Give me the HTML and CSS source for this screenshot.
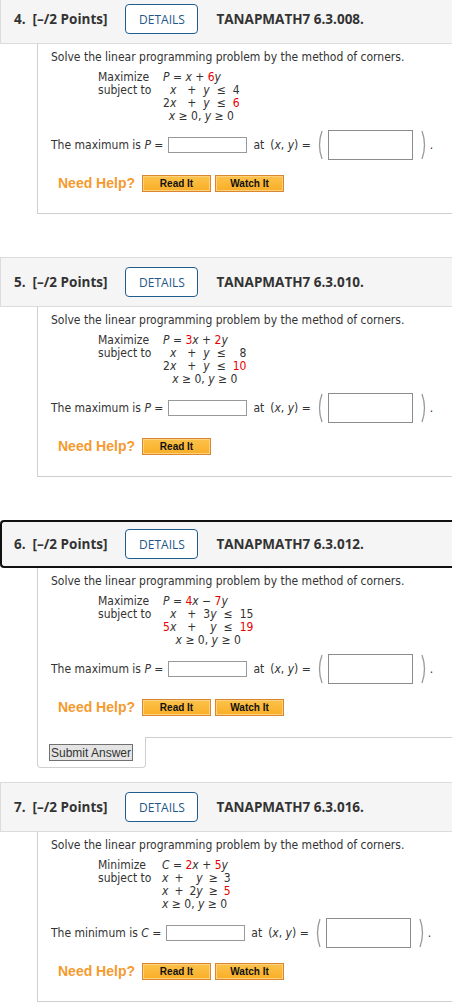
FILE: index.html
```html
<!DOCTYPE html>
<html lang="en">
<head>
  <meta charset="UTF-8" />
  <meta name="viewport" content="width=device-width, initial-scale=1.0" />
  <title>Assignment - Method of Corners</title>
  <link rel="stylesheet" href="styles.css">
</head>
<body>

  <!-- question 4 -->
  <div class="question first">
    <div class="q-head">
      <span class="q-num">4.</span>
      <span class="q-points">[–/2 Points]</span>
      <button class="details">DETAILS</button>
      <span class="q-code">TANAPMATH7 6.3.008.</span>
    </div>
    <div class="q-body">
      <p class="prompt">Solve the linear programming problem by the method of corners.</p>
      <div class="lp">
        <span class="lp-label">Maximize</span>
        <span class="lp-obj"><i>P</i> = <i>x</i> + <span class="red">6</span><i>y</i></span>
        <span class="lp-label">subject to</span>
        <span class="c1"><i>x</i></span><span>+</span><span class="c3"><i>y</i></span><span>≤</span><span class="val">4</span>
        <span></span>
        <span class="c1">2<i>x</i></span><span>+</span><span class="c3"><i>y</i></span><span>≤</span><span class="val red">6</span>
        <span></span>
        <span class="lp-nonneg"><i>x</i> ≥ 0, <i>y</i> ≥ 0</span>
      </div>
      <div class="answer">
        <span>The maximum is <i>P</i> =</span>
        <input class="box-small" type="text">
        <span class="at">at</span>
        <span class="xy">(<i>x</i>, <i>y</i>) =</span>
        <svg class="paren" width="6" height="30" viewBox="0 0 6 30"><path d="M5 1 Q0 15 5 29" /></svg>
        <input class="box-big" type="text">
        <svg class="paren" width="6" height="30" viewBox="0 0 6 30"><path d="M1 1 Q6 15 1 29" /></svg>
        <span class="dot">.</span>
      </div>
      <div class="help">
        <span class="need-help">Need Help?</span>
        <button class="btn-help">Read It</button>
        <button class="btn-help">Watch It</button>
      </div>
    </div>
  </div>

  <!-- question 5 -->
  <div class="question">
    <div class="q-head">
      <span class="q-num">5.</span>
      <span class="q-points">[–/2 Points]</span>
      <button class="details">DETAILS</button>
      <span class="q-code">TANAPMATH7 6.3.010.</span>
    </div>
    <div class="q-body">
      <p class="prompt">Solve the linear programming problem by the method of corners.</p>
      <div class="lp">
        <span class="lp-label">Maximize</span>
        <span class="lp-obj"><i>P</i> = <span class="red">3</span><i>x</i> + <span class="red">2</span><i>y</i></span>
        <span class="lp-label">subject to</span>
        <span class="c1"><i>x</i></span><span>+</span><span class="c3"><i>y</i></span><span>≤</span><span class="val">8</span>
        <span></span>
        <span class="c1">2<i>x</i></span><span>+</span><span class="c3"><i>y</i></span><span>≤</span><span class="val red">10</span>
        <span></span>
        <span class="lp-nonneg"><i>x</i> ≥ 0, <i>y</i> ≥ 0</span>
      </div>
      <div class="answer">
        <span>The maximum is <i>P</i> =</span>
        <input class="box-small" type="text">
        <span class="at">at</span>
        <span class="xy">(<i>x</i>, <i>y</i>) =</span>
        <svg class="paren" width="6" height="30" viewBox="0 0 6 30"><path d="M5 1 Q0 15 5 29" /></svg>
        <input class="box-big" type="text">
        <svg class="paren" width="6" height="30" viewBox="0 0 6 30"><path d="M1 1 Q6 15 1 29" /></svg>
        <span class="dot">.</span>
      </div>
      <div class="help">
        <span class="need-help">Need Help?</span>
        <button class="btn-help">Read It</button>
      </div>
    </div>
  </div>

  <!-- question 6 (current) -->
  <div class="question current">
    <div class="q-head">
      <span class="q-num">6.</span>
      <span class="q-points">[–/2 Points]</span>
      <button class="details">DETAILS</button>
      <span class="q-code">TANAPMATH7 6.3.012.</span>
    </div>
    <div class="q-body">
      <p class="prompt">Solve the linear programming problem by the method of corners.</p>
      <div class="lp">
        <span class="lp-label">Maximize</span>
        <span class="lp-obj"><i>P</i> = <span class="red">4</span><i>x</i> − <span class="red">7</span><i>y</i></span>
        <span class="lp-label">subject to</span>
        <span class="c1"><i>x</i></span><span>+</span><span class="c3">3<i>y</i></span><span>≤</span><span class="val">15</span>
        <span></span>
        <span class="c1"><span class="red">5</span><i>x</i></span><span>+</span><span class="c3"><i>y</i></span><span>≤</span><span class="val red">19</span>
        <span></span>
        <span class="lp-nonneg"><i>x</i> ≥ 0, <i>y</i> ≥ 0</span>
      </div>
      <div class="answer">
        <span>The maximum is <i>P</i> =</span>
        <input class="box-small" type="text">
        <span class="at">at</span>
        <span class="xy">(<i>x</i>, <i>y</i>) =</span>
        <svg class="paren" width="6" height="30" viewBox="0 0 6 30"><path d="M5 1 Q0 15 5 29" /></svg>
        <input class="box-big" type="text">
        <svg class="paren" width="6" height="30" viewBox="0 0 6 30"><path d="M1 1 Q6 15 1 29" /></svg>
        <span class="dot">.</span>
      </div>
      <div class="help">
        <span class="need-help">Need Help?</span>
        <button class="btn-help">Read It</button>
        <button class="btn-help">Watch It</button>
      </div>
    </div>
    <div class="submit-tab">
      <button class="btn-submit">Submit Answer</button>
    </div>
  </div>

  <!-- question 7 -->
  <div class="question after-submit">
    <div class="q-head">
      <span class="q-num">7.</span>
      <span class="q-points">[–/2 Points]</span>
      <button class="details">DETAILS</button>
      <span class="q-code">TANAPMATH7 6.3.016.</span>
    </div>
    <div class="q-body">
      <p class="prompt">Solve the linear programming problem by the method of corners.</p>
      <div class="lp lp-min">
        <span class="lp-label">Minimize</span>
        <span class="lp-obj"><i>C</i> = <span class="red">2</span><i>x</i> + <span class="red">5</span><i>y</i></span>
        <span class="lp-label">subject to</span>
        <span class="c1"><i>x</i></span><span>+</span><span class="c3"><i>y</i></span><span>≥</span><span class="val">3</span>
        <span></span>
        <span class="c1"><i>x</i></span><span>+</span><span class="c3">2<i>y</i></span><span>≥</span><span class="val red">5</span>
        <span></span>
        <span class="lp-nonneg"><i>x</i> ≥ 0, <i>y</i> ≥ 0</span>
      </div>
      <div class="answer">
        <span>The minimum is <i>C</i> =</span>
        <input class="box-small" type="text">
        <span class="at">at</span>
        <span class="xy">(<i>x</i>, <i>y</i>) =</span>
        <svg class="paren" width="6" height="30" viewBox="0 0 6 30"><path d="M5 1 Q0 15 5 29" /></svg>
        <input class="box-big" type="text">
        <svg class="paren" width="6" height="30" viewBox="0 0 6 30"><path d="M1 1 Q6 15 1 29" /></svg>
        <span class="dot">.</span>
      </div>
      <div class="help">
        <span class="need-help">Need Help?</span>
        <button class="btn-help">Read It</button>
        <button class="btn-help">Watch It</button>
      </div>
    </div>
  </div>

</body>
</html>
```

FILE: styles.css
```css
html, body {
  overflow: hidden;
}
body {
  margin: 0;
  background: white;
  color: #333;
  font-family: "DejaVu Sans Condensed", "DejaVu Sans", sans-serif;
  font-size: 12px;
}
.question {
  margin-bottom: 43px;
}
.question.first {
  margin-top: -6px;
}
.question.current {
  margin-bottom: 14px;
}

/* header bar */
.q-head {
  display: flex;
  align-items: center;
  height: 30px;
  padding: 9px 0 9px 13px;
  background: #f5f5f5;
  border: 1px solid #dcdcdc;
  border-right: none;
  font-family: "Open Sans", sans-serif;
  font-weight: 700;
  font-size: 13.5px;
  color: #333;
}
.current .q-head {
  padding: 7px 0 7px 12px;
  border: 2px solid #111;
  border-right: none;
  border-radius: 4px 0 0 4px;
}
.q-num {
  margin-right: 7px;
}
.details {
  width: 73px;
  height: 30px;
  margin: 0 18px;
  padding: 0;
  background: white;
  border: 1px solid #205d8f;
  border-radius: 4px;
  font-family: "Open Sans", sans-serif;
  font-size: 12px;
  color: #23578a;
}

/* question body */
.q-body {
  margin-left: 37px;
  padding: 7px 0 21px 13px;
  border-left: 1px solid #cfcfcf;
  border-bottom: 1px solid #cfcfcf;
  line-height: 13px;
}
.prompt {
  margin: 0;
}
.red {
  color: #e60000;
}
i {
  font-style: oblique;
}

.lp {
  display: grid;
  grid-template-columns: 58px repeat(5, auto);
  justify-content: start;
  column-gap: 7px;
  margin: 7px 0 0 47px;
}
.lp > .lp-label {
  white-space: nowrap;
  margin-right: -1px;
}
.lp-obj, .lp-nonneg {
  grid-column: 2 / span 5;
}
.lp-nonneg {
  text-align: center;
}
.c1 {
  text-align: right;
  padding-right: 4px;
}
.c3, .val {
  text-align: right;
}
.lp-min {
  column-gap: 6px;
}
.lp-min .c1 {
  text-align: left;
  padding-right: 0;
}
.lp-min .lp-nonneg {
  text-align: left;
}

/* answer line */
.answer {
  display: flex;
  align-items: center;
  height: 30px;
  margin-top: 7px;
}
.box-small {
  width: 79px;
  height: 16px;
  margin: 0 6px 0 5px;
  padding: 0;
  border: 1px solid #999;
  box-sizing: border-box;
}
.box-big {
  width: 85px;
  height: 30px;
  margin: 0 5px;
  padding: 0;
  border: 1px solid #8c8c8c;
  box-sizing: border-box;
}
.xy {
  margin-left: 6px;
}
.paren {
  margin-left: 6px;
}
.paren path {
  fill: none;
  stroke: #9a9a9a;
  stroke-width: 1.3;
}
.box-big + .paren {
  margin-left: 3px;
}
.dot {
  margin-left: 3px;
}

/* help row */
.help {
  display: flex;
  align-items: center;
  height: 18px;
  margin: 14px 0 0 7px;
}
.need-help {
  margin-right: 7px;
  font-family: "Liberation Sans", Arial, sans-serif;
  font-weight: bold;
  font-size: 14px;
  color: #f59a2e;
}
.btn-help {
  width: 69px;
  height: 17px;
  margin-right: 4px;
  padding: 0;
  background: linear-gradient(#fcc24a, #f9ae27);
  border: 1px solid #db862f;
  box-shadow: inset 0 0 0 1px #fdd27e;
  font-family: "Liberation Sans", Arial, sans-serif;
  font-weight: bold;
  font-size: 10px;
  color: #111;
}

/* submit tab under the current question */
.submit-tab {
  width: 96px;
  margin: -1px 0 0 37px;
  padding: 7px 0 6px 11px;
  background: white;
  border: 1px solid #cfcfcf;
  border-top: none;
  border-radius: 0 0 4px 4px;
}
.btn-submit {
  display: block;
  width: 84px;
  height: 17px;
  padding: 0;
  background: #e4e4e4;
  border: 1px solid #707070;
  font-family: "Liberation Sans", Arial, sans-serif;
  font-size: 12px;
  color: #333;
}
```
